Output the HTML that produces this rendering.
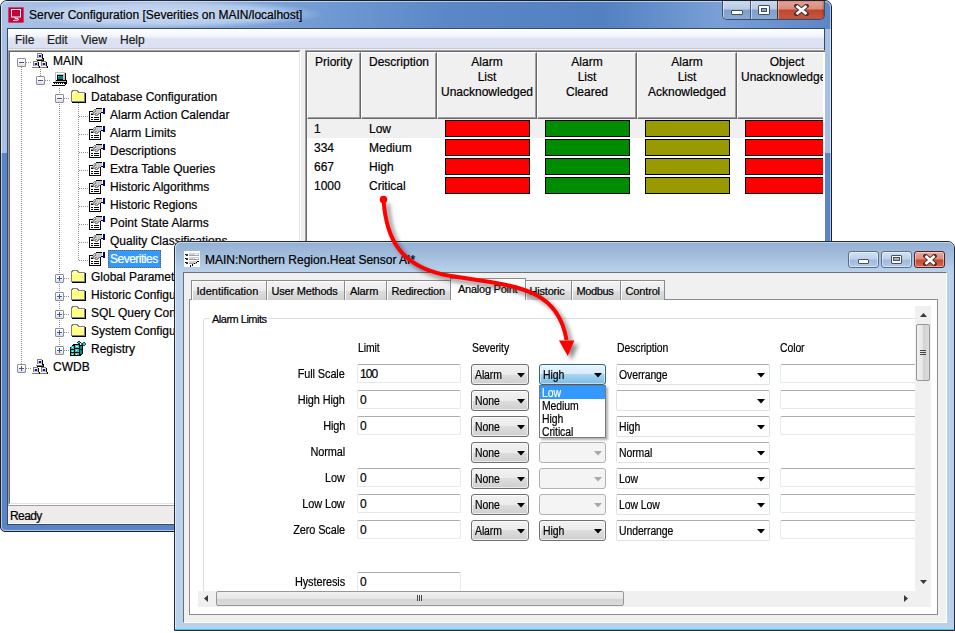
<!DOCTYPE html><html><head><meta charset="utf-8"><style>
html,body{margin:0;padding:0;background:#fff;}
body{width:955px;height:633px;position:relative;overflow:hidden;font-family:"Liberation Sans",sans-serif;}
.t{position:absolute;white-space:pre;font-family:"Liberation Sans",sans-serif;-webkit-text-stroke:0.2px currentColor;}
.b{position:absolute;box-sizing:border-box;}
svg{position:absolute;}
</style></head><body>

<div class="b" style="left:0px;top:0px;width:832px;height:532px;border:1px solid #1a1f2b;border-radius:7px 7px 5px 5px;background:linear-gradient(180deg,#a6bfe3 0px,#a6bfe3 152px,#5a85c5 152px,#5a85c5 100%);"></div>
<div class="b" style="left:1px;top:1px;width:830px;height:28px;border-radius:6px 6px 0 0;background:linear-gradient(90deg,#a9c2e5 0px,#9cb7e0 120px,#6f99d3 330px,#5b87c7 450px,#5280c2 600px,#7aa0d6 720px,#5a86c6 832px);"></div>
<div class="b" style="left:1px;top:1px;width:830px;height:530px;border:1px solid rgba(255,255,255,0.55);border-radius:6px 6px 4px 4px;"></div>
<div class="b" style="left:14px;top:0px;width:310px;height:28px;background:radial-gradient(closest-side,rgba(225,236,250,0.7) 0%,rgba(215,228,247,0.55) 70%,rgba(215,228,247,0) 100%);"></div>
<div class="b" style="left:7px;top:28px;width:818px;height:497px;background:#f0f0f0;border:1px solid #34496b;"></div>
<div class="b" style="left:8px;top:29px;width:816px;height:20px;background:linear-gradient(180deg,#ffffff 0%,#f3f5fb 35%,#dde3f2 50%,#dbe1f1 100%);"></div>
<div class="b" style="left:8px;top:48px;width:816px;height:1px;background:#c5cbd9;"></div>
<div class="t" style="left:15px;top:34px;font-size:12px;line-height:12px;color:#1e1e1e;">File</div>
<div class="t" style="left:47px;top:34px;font-size:12px;line-height:12px;color:#1e1e1e;">Edit</div>
<div class="t" style="left:81px;top:34px;font-size:12px;line-height:12px;color:#1e1e1e;">View</div>
<div class="t" style="left:120px;top:34px;font-size:12px;line-height:12px;color:#1e1e1e;">Help</div>
<div class="t" style="left:29px;top:9px;font-size:12px;line-height:12px;color:#000;">Server Configuration [Severities on MAIN/localhost]</div>
<svg style="left:8px;top:7px" width="16" height="16" viewBox="0 0 16 16">
<rect x="0" y="0" width="16" height="16" fill="#c4003d" stroke="#e9a0b5" stroke-width="0.8"/>
<rect x="3.5" y="2.5" width="9" height="7.5" fill="none" stroke="#fff" stroke-width="1"/>
<path d="M7 10 L7 11.5 L10 11.5 L10.5 13 L5 13.5" fill="none" stroke="#fff" stroke-width="1"/>
</svg>
<div class="b" style="left:722px;top:1px;width:103px;height:19px;border:1px solid #3b4d6b;border-top:none;border-radius:0 0 5px 5px;overflow:hidden;">
 <div class="b" style="left:0;top:0;width:28px;height:18px;background:linear-gradient(180deg,#cbd9ee 0%,#b8cbe6 45%,#7f9fcc 50%,#8aa8d3 100%);border-right:1px solid #44577a;box-shadow:inset 1px 0 0 rgba(255,255,255,0.5);"></div>
 <div class="b" style="left:28px;top:0;width:27px;height:18px;background:linear-gradient(180deg,#cbd9ee 0%,#b8cbe6 45%,#7f9fcc 50%,#8aa8d3 100%);border-right:1px solid #5e2a22;box-shadow:inset 1px 0 0 rgba(255,255,255,0.5);"></div>
 <div class="b" style="left:55px;top:0;width:47px;height:18px;background:linear-gradient(180deg,#e4a497 0%,#d78b7c 45%,#c0442d 50%,#c65a42 100%);box-shadow:inset 1px 0 0 rgba(255,255,255,0.35),inset -2px 0 2px rgba(90,20,10,0.35);"></div>
</div>
<div class="b" style="left:731px;top:10px;width:12px;height:5px;background:#fff;border:1px solid #434e62;border-radius:1px;"></div>
<div class="b" style="left:758px;top:5px;width:12px;height:10px;background:#fff;border:1px solid #434e62;border-radius:1px;"><div class="b" style="left:2px;top:2px;width:6px;height:4px;background:#8aa8d4;border:1px solid #434e62;"></div></div>
<svg style="left:794px;top:4px" width="15" height="12" viewBox="0 0 15 12"><path d="M2.5 2 L12.5 10 M12.5 2 L2.5 10" stroke="#4a3030" stroke-width="4.6" stroke-linecap="square"/><path d="M2.5 2 L12.5 10 M12.5 2 L2.5 10" stroke="#fff" stroke-width="2.8" stroke-linecap="butt"/></svg>

<div class="b" style="left:8px;top:50px;width:293px;height:455px;background:#fff;border-top:1px solid #a0a0a0;border-left:1px solid #a0a0a0;border-right:1px solid #fff;border-bottom:1px solid #fff;"></div>
<div class="b" style="left:9px;top:51px;width:291px;height:453px;border-top:1px solid #696969;border-left:1px solid #696969;border-right:1px solid #e3e3e3;border-bottom:1px solid #e3e3e3;"></div>
<div class="b" style="left:305px;top:50px;width:520px;height:455px;background:#fff;border-top:1px solid #a0a0a0;border-left:1px solid #a0a0a0;"></div>
<div class="b" style="left:306px;top:51px;width:519px;height:454px;border-top:1px solid #696969;border-left:1px solid #696969;"></div>
<div class="b" style="left:8px;top:505px;width:816px;height:19px;background:#efebea;border-top:1px solid #a0a0a0;border-bottom:1px solid #fff;"></div>
<div class="t" style="left:10px;top:510px;font-size:12px;line-height:12px;color:#000;letter-spacing:-0.6px;">Ready</div>
<div class="b" style="left:21px;top:67px;width:1px;height:300px;background:repeating-linear-gradient(180deg,#8e8e8e 0px,#8e8e8e 1px,transparent 1px,transparent 2px);"></div>
<div class="b" style="left:40px;top:69px;width:1px;height:7px;background:repeating-linear-gradient(180deg,#8e8e8e 0px,#8e8e8e 1px,transparent 1px,transparent 2px);"></div>
<div class="b" style="left:59px;top:88px;width:1px;height:258px;background:repeating-linear-gradient(180deg,#8e8e8e 0px,#8e8e8e 1px,transparent 1px,transparent 2px);"></div>
<div class="b" style="left:78px;top:103px;width:1px;height:157px;background:repeating-linear-gradient(180deg,#8e8e8e 0px,#8e8e8e 1px,transparent 1px,transparent 2px);"></div>
<div class="b" style="left:26px;top:62px;width:6px;height:1px;background:repeating-linear-gradient(90deg,#8e8e8e 0px,#8e8e8e 1px,transparent 1px,transparent 2px);"></div>
<div class="b" style="left:17px;top:58px;width:9px;height:9px;border:1px solid #8f8f8f;border-radius:1px;background:linear-gradient(180deg,#fff 0%,#f4f4f4 50%,#dcdcdc 100%);"></div>
<div class="b" style="left:19px;top:62px;width:5px;height:1px;background:#3c5aa8;"></div>
<svg style="left:32px;top:53px" width="16" height="16" viewBox="0 0 16 16" shape-rendering="crispEdges"><g fill="#c0c0c0"><rect x="5" y="0" width="5" height="5"/><rect x="4" y="5" width="7" height="2"/><rect x="1" y="8" width="5" height="5"/><rect x="0" y="13" width="7" height="2"/><rect x="9" y="8" width="5" height="5"/><rect x="8" y="13" width="7" height="2"/></g>
<g fill="#808080"><rect x="5" y="0" width="5" height="1"/><rect x="5" y="0" width="1" height="5"/><rect x="1" y="8" width="5" height="1"/><rect x="1" y="8" width="1" height="5"/><rect x="9" y="8" width="5" height="1"/><rect x="9" y="8" width="1" height="5"/><rect x="4" y="6" width="7" height="1"/><rect x="0" y="14" width="7" height="1"/><rect x="8" y="14" width="7" height="1"/></g>
<g fill="#ffffe0"><rect x="6" y="1" width="3" height="1"/><rect x="2" y="9" width="3" height="1"/><rect x="10" y="9" width="3" height="1"/><rect x="4" y="5" width="6" height="1"/><rect x="0" y="13" width="6" height="1"/><rect x="8" y="13" width="6" height="1"/></g>
<g fill="#0000ff"><rect x="7" y="2" width="2" height="2"/><rect x="3" y="10" width="2" height="2"/><rect x="11" y="10" width="2" height="2"/></g>
<g fill="#000"><rect x="10" y="1" width="1" height="5"/><rect x="11" y="5" width="1" height="3"/><rect x="5" y="7" width="7" height="1"/><rect x="6" y="9" width="1" height="4"/><rect x="7" y="13" width="1" height="2"/><rect x="14" y="9" width="1" height="4"/><rect x="15" y="13" width="1" height="2"/></g></svg>
<div class="t" style="left:53px;top:55px;font-size:12px;line-height:12px;color:#000;">MAIN</div>
<div class="b" style="left:45px;top:80px;width:6px;height:1px;background:repeating-linear-gradient(90deg,#8e8e8e 0px,#8e8e8e 1px,transparent 1px,transparent 2px);"></div>
<div class="b" style="left:36px;top:76px;width:9px;height:9px;border:1px solid #8f8f8f;border-radius:1px;background:linear-gradient(180deg,#fff 0%,#f4f4f4 50%,#dcdcdc 100%);"></div>
<div class="b" style="left:38px;top:80px;width:5px;height:1px;background:#3c5aa8;"></div>
<svg style="left:52px;top:71px" width="16" height="16" viewBox="0 0 16 16" shape-rendering="crispEdges"><rect x="3" y="1" width="10" height="9" fill="#c0c0c0"/><rect x="4" y="2" width="8" height="1" fill="#fff"/><rect x="4" y="2" width="1" height="7" fill="#fff"/><rect x="5" y="4" width="6" height="5" fill="#000"/><rect x="6" y="5" width="5" height="3" fill="#008080"/><rect x="6" y="5" width="1" height="1" fill="#00ffff"/><rect x="13" y="2" width="1" height="8" fill="#000"/><rect x="4" y="9" width="9" height="1" fill="#000"/>
<rect x="3" y="10" width="11" height="1" fill="#c0c0c0"/><rect x="14" y="9" width="1" height="4" fill="#000"/><rect x="1" y="11" width="13" height="1" fill="#000"/><rect x="2" y="12" width="1" height="1" fill="#000"/><rect x="4" y="12" width="1" height="1" fill="#000"/><rect x="6" y="12" width="1" height="1" fill="#000"/><rect x="8" y="12" width="1" height="1" fill="#000"/><rect x="10" y="12" width="1" height="1" fill="#000"/><rect x="12" y="12" width="1" height="1" fill="#000"/><rect x="0" y="13" width="13" height="1" fill="#fff"/><rect x="0" y="14" width="13" height="1" fill="#000"/><rect x="13" y="12" width="1" height="2" fill="#000"/></svg>
<div class="t" style="left:72px;top:73px;font-size:12px;line-height:12px;color:#000;">localhost</div>
<div class="b" style="left:64px;top:98px;width:6px;height:1px;background:repeating-linear-gradient(90deg,#8e8e8e 0px,#8e8e8e 1px,transparent 1px,transparent 2px);"></div>
<div class="b" style="left:55px;top:94px;width:9px;height:9px;border:1px solid #8f8f8f;border-radius:1px;background:linear-gradient(180deg,#fff 0%,#f4f4f4 50%,#dcdcdc 100%);"></div>
<div class="b" style="left:57px;top:98px;width:5px;height:1px;background:#3c5aa8;"></div>
<svg style="left:71px;top:90px" width="16" height="14" viewBox="0 0 16 14" shape-rendering="crispEdges"><path d="M0.5 2.5 L1.5 0.5 L6.5 0.5 L7.5 2.5 L13.5 2.5 L13.5 11.5 L0.5 11.5 Z" fill="#ffff80" stroke="#808080"/><rect x="1" y="12" width="14" height="1" fill="#000"/><rect x="14" y="3" width="1" height="10" fill="#000"/><rect x="1" y="3" width="12" height="1" fill="#fff" opacity="0.6"/></svg>
<div class="t" style="left:91px;top:91px;font-size:12px;line-height:12px;color:#000;">Database Configuration</div>
<div class="b" style="left:79px;top:116px;width:10px;height:1px;background:repeating-linear-gradient(90deg,#8e8e8e 0px,#8e8e8e 1px,transparent 1px,transparent 2px);"></div>
<svg style="left:89px;top:108px" width="16" height="15" viewBox="0 0 16 15" shape-rendering="crispEdges"><rect x="0.5" y="3.5" width="11" height="10" fill="#fff" stroke="#000"/><rect x="2" y="9" width="2" height="1" fill="#000"/><rect x="5" y="9" width="5" height="1" fill="#000"/><rect x="2" y="11" width="2" height="1" fill="#000"/><rect x="5" y="11" width="5" height="1" fill="#000"/><rect x="2" y="5" width="2" height="2" fill="#000"/>
<path d="M6 0.5 L2 5.5 L8.5 8.5 L11 5 Z" fill="#8a8a8a"/><path d="M3 5 L6 2 M5 6 L8 3 M7 7 L10 4" stroke="#fff" stroke-width="0.7"/><rect x="7" y="0" width="6" height="5" fill="#c8c8c8"/><rect x="7" y="0" width="6" height="1" fill="#000"/><rect x="12" y="4" width="2" height="1" fill="#000"/><rect x="14" y="0" width="2" height="6" fill="#000080"/></svg>
<div class="t" style="left:110px;top:109px;font-size:12px;line-height:12px;color:#000;">Alarm Action Calendar</div>
<div class="b" style="left:79px;top:134px;width:10px;height:1px;background:repeating-linear-gradient(90deg,#8e8e8e 0px,#8e8e8e 1px,transparent 1px,transparent 2px);"></div>
<svg style="left:89px;top:126px" width="16" height="15" viewBox="0 0 16 15" shape-rendering="crispEdges"><rect x="0.5" y="3.5" width="11" height="10" fill="#fff" stroke="#000"/><rect x="2" y="9" width="2" height="1" fill="#000"/><rect x="5" y="9" width="5" height="1" fill="#000"/><rect x="2" y="11" width="2" height="1" fill="#000"/><rect x="5" y="11" width="5" height="1" fill="#000"/><rect x="2" y="5" width="2" height="2" fill="#000"/>
<path d="M6 0.5 L2 5.5 L8.5 8.5 L11 5 Z" fill="#8a8a8a"/><path d="M3 5 L6 2 M5 6 L8 3 M7 7 L10 4" stroke="#fff" stroke-width="0.7"/><rect x="7" y="0" width="6" height="5" fill="#c8c8c8"/><rect x="7" y="0" width="6" height="1" fill="#000"/><rect x="12" y="4" width="2" height="1" fill="#000"/><rect x="14" y="0" width="2" height="6" fill="#000080"/></svg>
<div class="t" style="left:110px;top:127px;font-size:12px;line-height:12px;color:#000;">Alarm Limits</div>
<div class="b" style="left:79px;top:152px;width:10px;height:1px;background:repeating-linear-gradient(90deg,#8e8e8e 0px,#8e8e8e 1px,transparent 1px,transparent 2px);"></div>
<svg style="left:89px;top:144px" width="16" height="15" viewBox="0 0 16 15" shape-rendering="crispEdges"><rect x="0.5" y="3.5" width="11" height="10" fill="#fff" stroke="#000"/><rect x="2" y="9" width="2" height="1" fill="#000"/><rect x="5" y="9" width="5" height="1" fill="#000"/><rect x="2" y="11" width="2" height="1" fill="#000"/><rect x="5" y="11" width="5" height="1" fill="#000"/><rect x="2" y="5" width="2" height="2" fill="#000"/>
<path d="M6 0.5 L2 5.5 L8.5 8.5 L11 5 Z" fill="#8a8a8a"/><path d="M3 5 L6 2 M5 6 L8 3 M7 7 L10 4" stroke="#fff" stroke-width="0.7"/><rect x="7" y="0" width="6" height="5" fill="#c8c8c8"/><rect x="7" y="0" width="6" height="1" fill="#000"/><rect x="12" y="4" width="2" height="1" fill="#000"/><rect x="14" y="0" width="2" height="6" fill="#000080"/></svg>
<div class="t" style="left:110px;top:145px;font-size:12px;line-height:12px;color:#000;">Descriptions</div>
<div class="b" style="left:79px;top:170px;width:10px;height:1px;background:repeating-linear-gradient(90deg,#8e8e8e 0px,#8e8e8e 1px,transparent 1px,transparent 2px);"></div>
<svg style="left:89px;top:162px" width="16" height="15" viewBox="0 0 16 15" shape-rendering="crispEdges"><rect x="0.5" y="3.5" width="11" height="10" fill="#fff" stroke="#000"/><rect x="2" y="9" width="2" height="1" fill="#000"/><rect x="5" y="9" width="5" height="1" fill="#000"/><rect x="2" y="11" width="2" height="1" fill="#000"/><rect x="5" y="11" width="5" height="1" fill="#000"/><rect x="2" y="5" width="2" height="2" fill="#000"/>
<path d="M6 0.5 L2 5.5 L8.5 8.5 L11 5 Z" fill="#8a8a8a"/><path d="M3 5 L6 2 M5 6 L8 3 M7 7 L10 4" stroke="#fff" stroke-width="0.7"/><rect x="7" y="0" width="6" height="5" fill="#c8c8c8"/><rect x="7" y="0" width="6" height="1" fill="#000"/><rect x="12" y="4" width="2" height="1" fill="#000"/><rect x="14" y="0" width="2" height="6" fill="#000080"/></svg>
<div class="t" style="left:110px;top:163px;font-size:12px;line-height:12px;color:#000;">Extra Table Queries</div>
<div class="b" style="left:79px;top:188px;width:10px;height:1px;background:repeating-linear-gradient(90deg,#8e8e8e 0px,#8e8e8e 1px,transparent 1px,transparent 2px);"></div>
<svg style="left:89px;top:180px" width="16" height="15" viewBox="0 0 16 15" shape-rendering="crispEdges"><rect x="0.5" y="3.5" width="11" height="10" fill="#fff" stroke="#000"/><rect x="2" y="9" width="2" height="1" fill="#000"/><rect x="5" y="9" width="5" height="1" fill="#000"/><rect x="2" y="11" width="2" height="1" fill="#000"/><rect x="5" y="11" width="5" height="1" fill="#000"/><rect x="2" y="5" width="2" height="2" fill="#000"/>
<path d="M6 0.5 L2 5.5 L8.5 8.5 L11 5 Z" fill="#8a8a8a"/><path d="M3 5 L6 2 M5 6 L8 3 M7 7 L10 4" stroke="#fff" stroke-width="0.7"/><rect x="7" y="0" width="6" height="5" fill="#c8c8c8"/><rect x="7" y="0" width="6" height="1" fill="#000"/><rect x="12" y="4" width="2" height="1" fill="#000"/><rect x="14" y="0" width="2" height="6" fill="#000080"/></svg>
<div class="t" style="left:110px;top:181px;font-size:12px;line-height:12px;color:#000;">Historic Algorithms</div>
<div class="b" style="left:79px;top:206px;width:10px;height:1px;background:repeating-linear-gradient(90deg,#8e8e8e 0px,#8e8e8e 1px,transparent 1px,transparent 2px);"></div>
<svg style="left:89px;top:198px" width="16" height="15" viewBox="0 0 16 15" shape-rendering="crispEdges"><rect x="0.5" y="3.5" width="11" height="10" fill="#fff" stroke="#000"/><rect x="2" y="9" width="2" height="1" fill="#000"/><rect x="5" y="9" width="5" height="1" fill="#000"/><rect x="2" y="11" width="2" height="1" fill="#000"/><rect x="5" y="11" width="5" height="1" fill="#000"/><rect x="2" y="5" width="2" height="2" fill="#000"/>
<path d="M6 0.5 L2 5.5 L8.5 8.5 L11 5 Z" fill="#8a8a8a"/><path d="M3 5 L6 2 M5 6 L8 3 M7 7 L10 4" stroke="#fff" stroke-width="0.7"/><rect x="7" y="0" width="6" height="5" fill="#c8c8c8"/><rect x="7" y="0" width="6" height="1" fill="#000"/><rect x="12" y="4" width="2" height="1" fill="#000"/><rect x="14" y="0" width="2" height="6" fill="#000080"/></svg>
<div class="t" style="left:110px;top:199px;font-size:12px;line-height:12px;color:#000;">Historic Regions</div>
<div class="b" style="left:79px;top:224px;width:10px;height:1px;background:repeating-linear-gradient(90deg,#8e8e8e 0px,#8e8e8e 1px,transparent 1px,transparent 2px);"></div>
<svg style="left:89px;top:216px" width="16" height="15" viewBox="0 0 16 15" shape-rendering="crispEdges"><rect x="0.5" y="3.5" width="11" height="10" fill="#fff" stroke="#000"/><rect x="2" y="9" width="2" height="1" fill="#000"/><rect x="5" y="9" width="5" height="1" fill="#000"/><rect x="2" y="11" width="2" height="1" fill="#000"/><rect x="5" y="11" width="5" height="1" fill="#000"/><rect x="2" y="5" width="2" height="2" fill="#000"/>
<path d="M6 0.5 L2 5.5 L8.5 8.5 L11 5 Z" fill="#8a8a8a"/><path d="M3 5 L6 2 M5 6 L8 3 M7 7 L10 4" stroke="#fff" stroke-width="0.7"/><rect x="7" y="0" width="6" height="5" fill="#c8c8c8"/><rect x="7" y="0" width="6" height="1" fill="#000"/><rect x="12" y="4" width="2" height="1" fill="#000"/><rect x="14" y="0" width="2" height="6" fill="#000080"/></svg>
<div class="t" style="left:110px;top:217px;font-size:12px;line-height:12px;color:#000;">Point State Alarms</div>
<div class="b" style="left:79px;top:242px;width:10px;height:1px;background:repeating-linear-gradient(90deg,#8e8e8e 0px,#8e8e8e 1px,transparent 1px,transparent 2px);"></div>
<svg style="left:89px;top:234px" width="16" height="15" viewBox="0 0 16 15" shape-rendering="crispEdges"><rect x="0.5" y="3.5" width="11" height="10" fill="#fff" stroke="#000"/><rect x="2" y="9" width="2" height="1" fill="#000"/><rect x="5" y="9" width="5" height="1" fill="#000"/><rect x="2" y="11" width="2" height="1" fill="#000"/><rect x="5" y="11" width="5" height="1" fill="#000"/><rect x="2" y="5" width="2" height="2" fill="#000"/>
<path d="M6 0.5 L2 5.5 L8.5 8.5 L11 5 Z" fill="#8a8a8a"/><path d="M3 5 L6 2 M5 6 L8 3 M7 7 L10 4" stroke="#fff" stroke-width="0.7"/><rect x="7" y="0" width="6" height="5" fill="#c8c8c8"/><rect x="7" y="0" width="6" height="1" fill="#000"/><rect x="12" y="4" width="2" height="1" fill="#000"/><rect x="14" y="0" width="2" height="6" fill="#000080"/></svg>
<div class="t" style="left:110px;top:235px;font-size:12px;line-height:12px;color:#000;">Quality Classifications</div>
<div class="b" style="left:79px;top:260px;width:10px;height:1px;background:repeating-linear-gradient(90deg,#8e8e8e 0px,#8e8e8e 1px,transparent 1px,transparent 2px);"></div>
<svg style="left:89px;top:252px" width="16" height="15" viewBox="0 0 16 15" shape-rendering="crispEdges"><rect x="0.5" y="3.5" width="11" height="10" fill="#fff" stroke="#000"/><rect x="2" y="9" width="2" height="1" fill="#000"/><rect x="5" y="9" width="5" height="1" fill="#000"/><rect x="2" y="11" width="2" height="1" fill="#000"/><rect x="5" y="11" width="5" height="1" fill="#000"/><rect x="2" y="5" width="2" height="2" fill="#000"/>
<path d="M6 0.5 L2 5.5 L8.5 8.5 L11 5 Z" fill="#8a8a8a"/><path d="M3 5 L6 2 M5 6 L8 3 M7 7 L10 4" stroke="#fff" stroke-width="0.7"/><rect x="7" y="0" width="6" height="5" fill="#c8c8c8"/><rect x="7" y="0" width="6" height="1" fill="#000"/><rect x="12" y="4" width="2" height="1" fill="#000"/><rect x="14" y="0" width="2" height="6" fill="#000080"/></svg>
<div class="b" style="left:108px;top:250px;width:53px;height:18px;background:#3399ff;outline:1px dotted #7a5a2a;outline-offset:-1px;"></div>
<div class="t" style="left:110px;top:253px;font-size:12px;line-height:12px;color:#fff;letter-spacing:-0.5px;">Severities</div>
<div class="b" style="left:64px;top:278px;width:6px;height:1px;background:repeating-linear-gradient(90deg,#8e8e8e 0px,#8e8e8e 1px,transparent 1px,transparent 2px);"></div>
<div class="b" style="left:55px;top:274px;width:9px;height:9px;border:1px solid #8f8f8f;border-radius:1px;background:linear-gradient(180deg,#fff 0%,#f4f4f4 50%,#dcdcdc 100%);"></div>
<div class="b" style="left:57px;top:278px;width:5px;height:1px;background:#3c5aa8;"></div>
<div class="b" style="left:59px;top:276px;width:1px;height:5px;background:#3c5aa8;"></div>
<svg style="left:71px;top:270px" width="16" height="14" viewBox="0 0 16 14" shape-rendering="crispEdges"><path d="M0.5 2.5 L1.5 0.5 L6.5 0.5 L7.5 2.5 L13.5 2.5 L13.5 11.5 L0.5 11.5 Z" fill="#ffff80" stroke="#808080"/><rect x="1" y="12" width="14" height="1" fill="#000"/><rect x="14" y="3" width="1" height="10" fill="#000"/><rect x="1" y="3" width="12" height="1" fill="#fff" opacity="0.6"/></svg>
<div class="t" style="left:91px;top:271px;font-size:12px;line-height:12px;color:#000;">Global Parameters</div>
<div class="b" style="left:64px;top:296px;width:6px;height:1px;background:repeating-linear-gradient(90deg,#8e8e8e 0px,#8e8e8e 1px,transparent 1px,transparent 2px);"></div>
<div class="b" style="left:55px;top:292px;width:9px;height:9px;border:1px solid #8f8f8f;border-radius:1px;background:linear-gradient(180deg,#fff 0%,#f4f4f4 50%,#dcdcdc 100%);"></div>
<div class="b" style="left:57px;top:296px;width:5px;height:1px;background:#3c5aa8;"></div>
<div class="b" style="left:59px;top:294px;width:1px;height:5px;background:#3c5aa8;"></div>
<svg style="left:71px;top:288px" width="16" height="14" viewBox="0 0 16 14" shape-rendering="crispEdges"><path d="M0.5 2.5 L1.5 0.5 L6.5 0.5 L7.5 2.5 L13.5 2.5 L13.5 11.5 L0.5 11.5 Z" fill="#ffff80" stroke="#808080"/><rect x="1" y="12" width="14" height="1" fill="#000"/><rect x="14" y="3" width="1" height="10" fill="#000"/><rect x="1" y="3" width="12" height="1" fill="#fff" opacity="0.6"/></svg>
<div class="t" style="left:91px;top:289px;font-size:12px;line-height:12px;color:#000;">Historic Configuration</div>
<div class="b" style="left:64px;top:314px;width:6px;height:1px;background:repeating-linear-gradient(90deg,#8e8e8e 0px,#8e8e8e 1px,transparent 1px,transparent 2px);"></div>
<div class="b" style="left:55px;top:310px;width:9px;height:9px;border:1px solid #8f8f8f;border-radius:1px;background:linear-gradient(180deg,#fff 0%,#f4f4f4 50%,#dcdcdc 100%);"></div>
<div class="b" style="left:57px;top:314px;width:5px;height:1px;background:#3c5aa8;"></div>
<div class="b" style="left:59px;top:312px;width:1px;height:5px;background:#3c5aa8;"></div>
<svg style="left:71px;top:306px" width="16" height="14" viewBox="0 0 16 14" shape-rendering="crispEdges"><path d="M0.5 2.5 L1.5 0.5 L6.5 0.5 L7.5 2.5 L13.5 2.5 L13.5 11.5 L0.5 11.5 Z" fill="#ffff80" stroke="#808080"/><rect x="1" y="12" width="14" height="1" fill="#000"/><rect x="14" y="3" width="1" height="10" fill="#000"/><rect x="1" y="3" width="12" height="1" fill="#fff" opacity="0.6"/></svg>
<div class="t" style="left:91px;top:307px;font-size:12px;line-height:12px;color:#000;">SQL Query Configuration</div>
<div class="b" style="left:64px;top:332px;width:6px;height:1px;background:repeating-linear-gradient(90deg,#8e8e8e 0px,#8e8e8e 1px,transparent 1px,transparent 2px);"></div>
<div class="b" style="left:55px;top:328px;width:9px;height:9px;border:1px solid #8f8f8f;border-radius:1px;background:linear-gradient(180deg,#fff 0%,#f4f4f4 50%,#dcdcdc 100%);"></div>
<div class="b" style="left:57px;top:332px;width:5px;height:1px;background:#3c5aa8;"></div>
<div class="b" style="left:59px;top:330px;width:1px;height:5px;background:#3c5aa8;"></div>
<svg style="left:71px;top:324px" width="16" height="14" viewBox="0 0 16 14" shape-rendering="crispEdges"><path d="M0.5 2.5 L1.5 0.5 L6.5 0.5 L7.5 2.5 L13.5 2.5 L13.5 11.5 L0.5 11.5 Z" fill="#ffff80" stroke="#808080"/><rect x="1" y="12" width="14" height="1" fill="#000"/><rect x="14" y="3" width="1" height="10" fill="#000"/><rect x="1" y="3" width="12" height="1" fill="#fff" opacity="0.6"/></svg>
<div class="t" style="left:91px;top:325px;font-size:12px;line-height:12px;color:#000;">System Configuration</div>
<div class="b" style="left:64px;top:350px;width:6px;height:1px;background:repeating-linear-gradient(90deg,#8e8e8e 0px,#8e8e8e 1px,transparent 1px,transparent 2px);"></div>
<div class="b" style="left:55px;top:346px;width:9px;height:9px;border:1px solid #8f8f8f;border-radius:1px;background:linear-gradient(180deg,#fff 0%,#f4f4f4 50%,#dcdcdc 100%);"></div>
<div class="b" style="left:57px;top:350px;width:5px;height:1px;background:#3c5aa8;"></div>
<div class="b" style="left:59px;top:348px;width:1px;height:5px;background:#3c5aa8;"></div>
<svg style="left:70px;top:341px" width="16" height="16" viewBox="0 0 16 16" shape-rendering="crispEdges"><path d="M0 6 L3 3 L10 3 L10 4 L13 3 L13 13 L10 15 L0 15 Z" fill="#000"/>
<rect x="1" y="5" width="3" height="3" fill="#00d8d8"/><rect x="5" y="4" width="4" height="3" fill="#00d8d8"/><rect x="1" y="9" width="3" height="2" fill="#00d8d8"/><rect x="5" y="8" width="4" height="3" fill="#00d8d8"/><rect x="1" y="12" width="3" height="2" fill="#00d8d8"/><rect x="5" y="12" width="4" height="2" fill="#00d8d8"/><rect x="6" y="12" width="3" height="2" fill="#00d8d8"/>
<rect x="10" y="5" width="2" height="3" fill="#008c8c"/><rect x="10" y="9" width="2" height="4" fill="#008c8c"/>
<g fill="#fff"><rect x="2" y="6" width="1" height="1"/><rect x="6" y="5" width="2" height="1"/><rect x="2" y="10" width="1" height="1"/><rect x="6" y="9" width="1" height="1"/><rect x="2" y="13" width="1" height="1"/><rect x="6" y="13" width="1" height="1"/></g>
<path d="M7 1.5 L9 0 L11 1.5 L9 3 Z" fill="#00e0e0" stroke="#000" stroke-width="0.7"/><path d="M11 3 L13.5 1.5 L16 3 L13.5 4.5 Z" fill="#00e0e0" stroke="#000" stroke-width="0.7"/></svg>
<div class="t" style="left:91px;top:343px;font-size:12px;line-height:12px;color:#000;">Registry</div>
<div class="b" style="left:26px;top:368px;width:6px;height:1px;background:repeating-linear-gradient(90deg,#8e8e8e 0px,#8e8e8e 1px,transparent 1px,transparent 2px);"></div>
<div class="b" style="left:17px;top:364px;width:9px;height:9px;border:1px solid #8f8f8f;border-radius:1px;background:linear-gradient(180deg,#fff 0%,#f4f4f4 50%,#dcdcdc 100%);"></div>
<div class="b" style="left:19px;top:368px;width:5px;height:1px;background:#3c5aa8;"></div>
<div class="b" style="left:21px;top:366px;width:1px;height:5px;background:#3c5aa8;"></div>
<svg style="left:32px;top:359px" width="16" height="16" viewBox="0 0 16 16" shape-rendering="crispEdges"><g fill="#c0c0c0"><rect x="5" y="0" width="5" height="5"/><rect x="4" y="5" width="7" height="2"/><rect x="1" y="8" width="5" height="5"/><rect x="0" y="13" width="7" height="2"/><rect x="9" y="8" width="5" height="5"/><rect x="8" y="13" width="7" height="2"/></g>
<g fill="#808080"><rect x="5" y="0" width="5" height="1"/><rect x="5" y="0" width="1" height="5"/><rect x="1" y="8" width="5" height="1"/><rect x="1" y="8" width="1" height="5"/><rect x="9" y="8" width="5" height="1"/><rect x="9" y="8" width="1" height="5"/><rect x="4" y="6" width="7" height="1"/><rect x="0" y="14" width="7" height="1"/><rect x="8" y="14" width="7" height="1"/></g>
<g fill="#ffffe0"><rect x="6" y="1" width="3" height="1"/><rect x="2" y="9" width="3" height="1"/><rect x="10" y="9" width="3" height="1"/><rect x="4" y="5" width="6" height="1"/><rect x="0" y="13" width="6" height="1"/><rect x="8" y="13" width="6" height="1"/></g>
<g fill="#0000ff"><rect x="7" y="2" width="2" height="2"/><rect x="3" y="10" width="2" height="2"/><rect x="11" y="10" width="2" height="2"/></g>
<g fill="#000"><rect x="10" y="1" width="1" height="5"/><rect x="11" y="5" width="1" height="3"/><rect x="5" y="7" width="7" height="1"/><rect x="6" y="9" width="1" height="4"/><rect x="7" y="13" width="1" height="2"/><rect x="14" y="9" width="1" height="4"/><rect x="15" y="13" width="1" height="2"/></g></svg>
<div class="t" style="left:53px;top:361px;font-size:12px;line-height:12px;color:#000;">CWDB</div>
<div class="b" style="left:307px;top:52px;width:516px;height:452px;overflow:hidden;">
<div class="b" style="left:0px;top:0px;width:54px;height:67px;background:#f0f0f0;border-left:1px solid #fff;border-top:1px solid #fff;border-right:1px solid #696969;border-bottom:1px solid #696969;box-shadow:inset -1px -1px 0 #a0a0a0;"></div>
<div class="b" style="left:54px;top:0px;width:76px;height:67px;background:#f0f0f0;border-left:1px solid #fff;border-top:1px solid #fff;border-right:1px solid #696969;border-bottom:1px solid #696969;box-shadow:inset -1px -1px 0 #a0a0a0;"></div>
<div class="b" style="left:130px;top:0px;width:100px;height:67px;background:#f0f0f0;border-left:1px solid #fff;border-top:1px solid #fff;border-right:1px solid #696969;border-bottom:1px solid #696969;box-shadow:inset -1px -1px 0 #a0a0a0;"></div>
<div class="b" style="left:230px;top:0px;width:100px;height:67px;background:#f0f0f0;border-left:1px solid #fff;border-top:1px solid #fff;border-right:1px solid #696969;border-bottom:1px solid #696969;box-shadow:inset -1px -1px 0 #a0a0a0;"></div>
<div class="b" style="left:330px;top:0px;width:100px;height:67px;background:#f0f0f0;border-left:1px solid #fff;border-top:1px solid #fff;border-right:1px solid #696969;border-bottom:1px solid #696969;box-shadow:inset -1px -1px 0 #a0a0a0;"></div>
<div class="b" style="left:430px;top:0px;width:100px;height:67px;background:#f0f0f0;border-left:1px solid #fff;border-top:1px solid #fff;border-right:1px solid #696969;border-bottom:1px solid #696969;box-shadow:inset -1px -1px 0 #a0a0a0;"></div>
<div class="b" style="left:0px;top:67px;width:516px;height:19px;background:#f0f0f0;"></div>
</div>
<div class="t" style="left:315px;top:56px;font-size:12px;line-height:12px;color:#000;">Priority</div>
<div class="t" style="left:369px;top:56px;font-size:12px;line-height:12px;color:#000;">Description</div>
<div class="t" style="left:427px;width:120px;text-align:center;top:56px;font-size:12px;line-height:12px;">Alarm</div>
<div class="t" style="left:427px;width:120px;text-align:center;top:71px;font-size:12px;line-height:12px;">List</div>
<div class="t" style="left:427px;width:120px;text-align:center;top:86px;font-size:12px;line-height:12px;">Unacknowledged</div>
<div class="t" style="left:527px;width:120px;text-align:center;top:56px;font-size:12px;line-height:12px;">Alarm</div>
<div class="t" style="left:527px;width:120px;text-align:center;top:71px;font-size:12px;line-height:12px;">List</div>
<div class="t" style="left:527px;width:120px;text-align:center;top:86px;font-size:12px;line-height:12px;">Cleared</div>
<div class="t" style="left:627px;width:120px;text-align:center;top:56px;font-size:12px;line-height:12px;">Alarm</div>
<div class="t" style="left:627px;width:120px;text-align:center;top:71px;font-size:12px;line-height:12px;">List</div>
<div class="t" style="left:627px;width:120px;text-align:center;top:86px;font-size:12px;line-height:12px;">Acknowledged</div>
<div class="b" style="left:737px;top:52px;width:86px;height:66px;overflow:hidden;">
<div class="t" style="left:-10px;width:120px;text-align:center;top:56px;font-size:12px;line-height:12px;top:4px;">Object</div>
<div class="t" style="left:-10px;width:120px;text-align:center;font-size:12px;line-height:12px;top:19px;">Unacknowledged</div>
</div>
<div class="t" style="left:314px;top:123px;font-size:12px;line-height:12px;color:#000;">1</div>
<div class="t" style="left:369px;top:123px;font-size:12px;line-height:12px;color:#000;">Low</div>
<div class="b" style="left:445px;top:120px;width:85px;height:17px;background:#ff0000;border:1px solid #000;"></div>
<div class="b" style="left:545px;top:120px;width:85px;height:17px;background:#008c00;border:1px solid #000;"></div>
<div class="b" style="left:645px;top:120px;width:85px;height:17px;background:#999900;border:1px solid #000;"></div>
<div class="b" style="left:745px;top:120px;width:78px;height:17px;background:#ff0000;border:1px solid #000;border-right:none;"></div>
<div class="t" style="left:314px;top:142px;font-size:12px;line-height:12px;color:#000;">334</div>
<div class="t" style="left:369px;top:142px;font-size:12px;line-height:12px;color:#000;">Medium</div>
<div class="b" style="left:445px;top:139px;width:85px;height:17px;background:#ff0000;border:1px solid #000;"></div>
<div class="b" style="left:545px;top:139px;width:85px;height:17px;background:#008c00;border:1px solid #000;"></div>
<div class="b" style="left:645px;top:139px;width:85px;height:17px;background:#999900;border:1px solid #000;"></div>
<div class="b" style="left:745px;top:139px;width:78px;height:17px;background:#ff0000;border:1px solid #000;border-right:none;"></div>
<div class="t" style="left:314px;top:161px;font-size:12px;line-height:12px;color:#000;">667</div>
<div class="t" style="left:369px;top:161px;font-size:12px;line-height:12px;color:#000;">High</div>
<div class="b" style="left:445px;top:158px;width:85px;height:17px;background:#ff0000;border:1px solid #000;"></div>
<div class="b" style="left:545px;top:158px;width:85px;height:17px;background:#008c00;border:1px solid #000;"></div>
<div class="b" style="left:645px;top:158px;width:85px;height:17px;background:#999900;border:1px solid #000;"></div>
<div class="b" style="left:745px;top:158px;width:78px;height:17px;background:#ff0000;border:1px solid #000;border-right:none;"></div>
<div class="t" style="left:314px;top:180px;font-size:12px;line-height:12px;color:#000;">1000</div>
<div class="t" style="left:369px;top:180px;font-size:12px;line-height:12px;color:#000;">Critical</div>
<div class="b" style="left:445px;top:177px;width:85px;height:17px;background:#ff0000;border:1px solid #000;"></div>
<div class="b" style="left:545px;top:177px;width:85px;height:17px;background:#008c00;border:1px solid #000;"></div>
<div class="b" style="left:645px;top:177px;width:85px;height:17px;background:#999900;border:1px solid #000;"></div>
<div class="b" style="left:745px;top:177px;width:78px;height:17px;background:#ff0000;border:1px solid #000;border-right:none;"></div>
<div class="b" style="left:174px;top:241px;width:781px;height:390px;border:1px solid #232a33;border-radius:7px 7px 0 0;background:#b9d1ea;overflow:hidden;"></div>
<div class="b" style="left:175px;top:242px;width:779px;height:30px;border-radius:6px 6px 0 0;background:linear-gradient(180deg,#93b0d3 0%,#a4bedd 50%,#bad2eb 100%);"></div>
<div class="b" style="left:175px;top:242px;width:779px;height:388px;border-left:1px solid rgba(255,255,255,0.5);border-top:1px solid rgba(255,255,255,0.45);border-radius:6px 6px 0 0;"></div>
<div class="b" style="left:175px;top:629px;width:779px;height:1px;background:#3fc3ea;"></div>
<div class="b" style="left:183px;top:272px;width:764px;height:351px;background:#f0f0f0;border-left:1px solid #6f6f6f;border-top:1px solid #6f6f6f;border-right:1px solid #fff;border-bottom:1px solid #fff;"></div>
<div class="t" style="left:205px;top:254px;font-size:12px;line-height:12px;color:#000;">MAIN:Northern Region.Heat Sensor AI*</div>
<svg style="left:184px;top:251px" width="16" height="16" viewBox="0 0 16 16" shape-rendering="crispEdges"><rect x="0" y="0" width="16" height="16" fill="#fff"/>
<rect x="5" y="2" width="10" height="3" fill="#d0d0d0"/><rect x="5" y="6" width="10" height="3" fill="#d0d0d0"/><rect x="5" y="10" width="8" height="3" fill="#d0d0d0"/>
<rect x="5" y="4" width="10" height="1" fill="#a0a0a0"/><rect x="5" y="8" width="10" height="1" fill="#a0a0a0"/><rect x="5" y="12" width="8" height="1" fill="#a0a0a0"/>
<rect x="1" y="3" width="1" height="1" fill="#000"/><rect x="2" y="3" width="2" height="2" fill="#333"/><rect x="1" y="7" width="1" height="1" fill="#000"/><rect x="2" y="7" width="2" height="2" fill="#333"/><rect x="1" y="11" width="1" height="1" fill="#000"/><rect x="2" y="11" width="2" height="2" fill="#333"/>
<path d="M6 15.5 L9 13.5 L12 12 L15 10" stroke="#000" stroke-width="1.3" stroke-dasharray="1.5 0.7"/><rect x="11" y="3" width="3" height="1" fill="#fff"/><rect x="11" y="7" width="3" height="1" fill="#fff"/></svg>
<div class="b" style="left:848px;top:251px;width:31px;height:17px;border:1px solid #59708f;border-radius:3px;background:linear-gradient(180deg,#d3e1f1 0%,#bfd2ea 45%,#9fbade 55%,#b4cbe8 100%);box-shadow:inset 0 0 0 1px rgba(255,255,255,0.45);"></div>
<div class="b" style="left:881px;top:251px;width:31px;height:17px;border:1px solid #59708f;border-radius:3px;background:linear-gradient(180deg,#d3e1f1 0%,#bfd2ea 45%,#9fbade 55%,#b4cbe8 100%);box-shadow:inset 0 0 0 1px rgba(255,255,255,0.45);"></div>
<div class="b" style="left:914px;top:251px;width:31px;height:17px;border:1px solid #5a1d1d;border-radius:3px;background:linear-gradient(180deg,#e9a99b 0%,#dc8c7b 45%,#c5482a 55%,#d66a50 100%);box-shadow:inset 0 0 0 1px rgba(255,255,255,0.45);"></div>
<div class="b" style="left:858px;top:259px;width:11px;height:5px;background:#fff;border:1px solid #46505e;border-radius:1px;"></div>
<div class="b" style="left:891px;top:255px;width:11px;height:9px;background:#fff;border:1px solid #46505e;border-radius:1px;"></div>
<div class="b" style="left:893px;top:257px;width:7px;height:4px;background:#9db8dc;border:1px solid #46505e;"></div>
<svg style="left:923px;top:254px" width="14" height="12" viewBox="0 0 14 12"><path d="M2.5 2 L11.5 10 M11.5 2 L2.5 10" stroke="#4a3030" stroke-width="4.4" stroke-linecap="square"/><path d="M2.5 2 L11.5 10 M11.5 2 L2.5 10" stroke="#fff" stroke-width="2.6"/></svg>
<div class="b" style="left:189px;top:299px;width:749px;height:316px;background:#fff;border:1px solid #898c95;"></div>
<div class="b" style="left:191px;top:280px;width:76px;height:20px;border:1px solid #898c95;border-bottom:none;background:linear-gradient(180deg,#f3f3f3 0%,#ebebeb 50%,#dedede 52%,#d0d0d0 100%);box-shadow:inset 1px 1px 0 #fff;"></div>
<div class="t" style="left:196.5px;top:286px;font-size:11px;line-height:11px;color:#000;letter-spacing:0px;">Identification</div>
<div class="b" style="left:266px;top:280px;width:79px;height:20px;border:1px solid #898c95;border-bottom:none;background:linear-gradient(180deg,#f3f3f3 0%,#ebebeb 50%,#dedede 52%,#d0d0d0 100%);box-shadow:inset 1px 1px 0 #fff;"></div>
<div class="t" style="left:271.5px;top:286px;font-size:11px;line-height:11px;color:#000;letter-spacing:-0.2px;">User Methods</div>
<div class="b" style="left:344px;top:280px;width:43px;height:20px;border:1px solid #898c95;border-bottom:none;background:linear-gradient(180deg,#f3f3f3 0%,#ebebeb 50%,#dedede 52%,#d0d0d0 100%);box-shadow:inset 1px 1px 0 #fff;"></div>
<div class="t" style="left:350px;top:286px;font-size:11px;line-height:11px;color:#000;letter-spacing:-0.1px;">Alarm</div>
<div class="b" style="left:386px;top:280px;width:65px;height:20px;border:1px solid #898c95;border-bottom:none;background:linear-gradient(180deg,#f3f3f3 0%,#ebebeb 50%,#dedede 52%,#d0d0d0 100%);box-shadow:inset 1px 1px 0 #fff;"></div>
<div class="t" style="left:391.5px;top:286px;font-size:11px;line-height:11px;color:#000;letter-spacing:-0.2px;">Redirection</div>
<div class="b" style="left:525px;top:280px;width:47px;height:20px;border:1px solid #898c95;border-bottom:none;background:linear-gradient(180deg,#f3f3f3 0%,#ebebeb 50%,#dedede 52%,#d0d0d0 100%);box-shadow:inset 1px 1px 0 #fff;"></div>
<div class="t" style="left:529.5px;top:286px;font-size:11px;line-height:11px;color:#000;letter-spacing:-0.2px;">Historic</div>
<div class="b" style="left:571px;top:280px;width:50px;height:20px;border:1px solid #898c95;border-bottom:none;background:linear-gradient(180deg,#f3f3f3 0%,#ebebeb 50%,#dedede 52%,#d0d0d0 100%);box-shadow:inset 1px 1px 0 #fff;"></div>
<div class="t" style="left:576.5px;top:286px;font-size:11px;line-height:11px;color:#000;letter-spacing:-0.4px;">Modbus</div>
<div class="b" style="left:620px;top:280px;width:45px;height:20px;border:1px solid #898c95;border-bottom:none;background:linear-gradient(180deg,#f3f3f3 0%,#ebebeb 50%,#dedede 52%,#d0d0d0 100%);box-shadow:inset 1px 1px 0 #fff;"></div>
<div class="t" style="left:625.5px;top:286px;font-size:11px;line-height:11px;color:#000;letter-spacing:-0.15px;">Control</div>
<div class="b" style="left:450px;top:278px;width:76px;height:22px;border:1px solid #898c95;border-bottom:none;background:#fff;"></div>
<div class="t" style="left:458px;top:284px;font-size:11px;line-height:11px;color:#000;letter-spacing:-0.25px;">Analog Point</div>
<div class="b" style="left:190px;top:300px;width:741px;height:291px;overflow:hidden;">
<div class="b" style="left:13px;top:18px;width:800px;height:400px;border:1px solid #d5dfe5;border-radius:3px;"></div>
<div class="b" style="left:19px;top:12px;width:59px;height:12px;background:#fff;"></div>
</div>
<div class="t" style="left:212px;top:314px;font-size:11px;line-height:11px;color:#000;letter-spacing:-0.5px;">Alarm Limits</div>
<div class="t" style="left:358px;top:342px;font-size:12px;line-height:12px;color:#000;transform:scaleX(0.87);transform-origin:left top;letter-spacing:-0.1px;">Limit</div>
<div class="t" style="left:472px;top:342px;font-size:12px;line-height:12px;color:#000;transform:scaleX(0.87);transform-origin:left top;letter-spacing:-0.1px;">Severity</div>
<div class="t" style="left:617px;top:342px;font-size:12px;line-height:12px;color:#000;transform:scaleX(0.87);transform-origin:left top;letter-spacing:-0.1px;">Description</div>
<div class="t" style="left:780px;top:342px;font-size:12px;line-height:12px;color:#000;transform:scaleX(0.87);transform-origin:left top;letter-spacing:-0.1px;">Color</div>
<div class="t" style="right:610px;top:368px;font-size:12px;line-height:12px;color:#000;transform:scaleX(0.91);transform-origin:right top;letter-spacing:-0.1px;">Full Scale</div>
<div class="b" style="left:357px;top:364px;width:104px;height:19px;background:#fff;border:1px solid #e3e9ef;border-top-color:#abadb3;border-radius:2px;"></div>
<div class="t" style="left:360px;top:368px;font-size:12px;line-height:12px;color:#000;letter-spacing:-0.9px;">100</div>
<div class="b" style="left:471px;top:364px;width:58px;height:21px;border:1px solid #707070;border-radius:3px;background:linear-gradient(180deg,#f2f2f2 0%,#ebebeb 50%,#dddddd 50%,#cfcfcf 100%);box-shadow:inset 0 0 0 1px rgba(255,255,255,0.6);"></div>
<div class="t" style="left:475px;top:369px;font-size:12px;line-height:12px;color:#000;transform:scaleX(0.87);transform-origin:left top;letter-spacing:-0.1px;">Alarm</div>
<svg style="left:517px;top:373px" width="8" height="5" viewBox="0 0 8 5"><path d="M0 0 L8 0 L4 4.5 Z" fill="#000"/></svg>
<div class="b" style="left:539px;top:364px;width:67px;height:21px;border:1px solid #2c628b;border-radius:3px;background:linear-gradient(180deg,#e8f4fc 0%,#d6ecf9 48%,#a6d5f2 50%,#7cbbe2 100%);box-shadow:inset 0 0 0 1px rgba(255,255,255,0.5);"></div>
<div class="t" style="left:543px;top:369px;font-size:12px;line-height:12px;color:#000;transform:scaleX(0.87);transform-origin:left top;letter-spacing:-0.1px;">High</div>
<svg style="left:594px;top:373px" width="8" height="5" viewBox="0 0 8 5"><path d="M0 0 L8 0 L4 4.5 Z" fill="#000"/></svg>
<div class="b" style="left:616px;top:364px;width:154px;height:21px;background:#fff;border:1px solid #dde3e8;border-top-color:#abadb3;border-radius:2px;"></div>
<div class="t" style="left:619px;top:369px;font-size:12px;line-height:12px;color:#000;transform:scaleX(0.87);transform-origin:left top;letter-spacing:-0.1px;">Overrange</div>
<svg style="left:757px;top:373px" width="8" height="5" viewBox="0 0 8 5"><path d="M0 0 L8 0 L4 4.5 Z" fill="#000"/></svg>
<div class="b" style="left:780px;top:364px;width:140px;height:19px;background:#fff;border:1px solid #e3e9ef;border-top-color:#abadb3;border-radius:2px;"></div>
<div class="t" style="right:610px;top:394px;font-size:12px;line-height:12px;color:#000;transform:scaleX(0.91);transform-origin:right top;letter-spacing:-0.1px;">High High</div>
<div class="b" style="left:357px;top:390px;width:104px;height:19px;background:#fff;border:1px solid #e3e9ef;border-top-color:#abadb3;border-radius:2px;"></div>
<div class="t" style="left:360px;top:394px;font-size:12px;line-height:12px;color:#000;letter-spacing:-0.9px;">0</div>
<div class="b" style="left:471px;top:390px;width:58px;height:21px;border:1px solid #707070;border-radius:3px;background:linear-gradient(180deg,#f2f2f2 0%,#ebebeb 50%,#dddddd 50%,#cfcfcf 100%);box-shadow:inset 0 0 0 1px rgba(255,255,255,0.6);"></div>
<div class="t" style="left:475px;top:395px;font-size:12px;line-height:12px;color:#000;transform:scaleX(0.87);transform-origin:left top;letter-spacing:-0.1px;">None</div>
<svg style="left:517px;top:399px" width="8" height="5" viewBox="0 0 8 5"><path d="M0 0 L8 0 L4 4.5 Z" fill="#000"/></svg>
<div class="b" style="left:616px;top:390px;width:154px;height:21px;background:#fff;border:1px solid #dde3e8;border-top-color:#abadb3;border-radius:2px;"></div>
<svg style="left:757px;top:399px" width="8" height="5" viewBox="0 0 8 5"><path d="M0 0 L8 0 L4 4.5 Z" fill="#000"/></svg>
<div class="b" style="left:780px;top:390px;width:140px;height:19px;background:#fff;border:1px solid #e3e9ef;border-top-color:#abadb3;border-radius:2px;"></div>
<div class="t" style="right:610px;top:420px;font-size:12px;line-height:12px;color:#000;transform:scaleX(0.91);transform-origin:right top;letter-spacing:-0.1px;">High</div>
<div class="b" style="left:357px;top:416px;width:104px;height:19px;background:#fff;border:1px solid #e3e9ef;border-top-color:#abadb3;border-radius:2px;"></div>
<div class="t" style="left:360px;top:420px;font-size:12px;line-height:12px;color:#000;letter-spacing:-0.9px;">0</div>
<div class="b" style="left:471px;top:416px;width:58px;height:21px;border:1px solid #707070;border-radius:3px;background:linear-gradient(180deg,#f2f2f2 0%,#ebebeb 50%,#dddddd 50%,#cfcfcf 100%);box-shadow:inset 0 0 0 1px rgba(255,255,255,0.6);"></div>
<div class="t" style="left:475px;top:421px;font-size:12px;line-height:12px;color:#000;transform:scaleX(0.87);transform-origin:left top;letter-spacing:-0.1px;">None</div>
<svg style="left:517px;top:425px" width="8" height="5" viewBox="0 0 8 5"><path d="M0 0 L8 0 L4 4.5 Z" fill="#000"/></svg>
<div class="b" style="left:616px;top:416px;width:154px;height:21px;background:#fff;border:1px solid #dde3e8;border-top-color:#abadb3;border-radius:2px;"></div>
<div class="t" style="left:619px;top:421px;font-size:12px;line-height:12px;color:#000;transform:scaleX(0.87);transform-origin:left top;letter-spacing:-0.1px;">High</div>
<svg style="left:757px;top:425px" width="8" height="5" viewBox="0 0 8 5"><path d="M0 0 L8 0 L4 4.5 Z" fill="#000"/></svg>
<div class="b" style="left:780px;top:416px;width:140px;height:19px;background:#fff;border:1px solid #e3e9ef;border-top-color:#abadb3;border-radius:2px;"></div>
<div class="t" style="right:610px;top:446px;font-size:12px;line-height:12px;color:#000;transform:scaleX(0.91);transform-origin:right top;letter-spacing:-0.1px;">Normal</div>
<div class="b" style="left:471px;top:442px;width:58px;height:21px;border:1px solid #707070;border-radius:3px;background:linear-gradient(180deg,#f2f2f2 0%,#ebebeb 50%,#dddddd 50%,#cfcfcf 100%);box-shadow:inset 0 0 0 1px rgba(255,255,255,0.6);"></div>
<div class="t" style="left:475px;top:447px;font-size:12px;line-height:12px;color:#000;transform:scaleX(0.87);transform-origin:left top;letter-spacing:-0.1px;">None</div>
<svg style="left:517px;top:451px" width="8" height="5" viewBox="0 0 8 5"><path d="M0 0 L8 0 L4 4.5 Z" fill="#000"/></svg>
<div class="b" style="left:539px;top:442px;width:67px;height:21px;border:1px solid #adb2b5;border-radius:3px;background:#f4f4f4;"></div>
<svg style="left:594px;top:451px" width="8" height="5" viewBox="0 0 8 5"><path d="M0 0 L8 0 L4 4.5 Z" fill="#a8a8a8"/></svg>
<div class="b" style="left:616px;top:442px;width:154px;height:21px;background:#fff;border:1px solid #dde3e8;border-top-color:#abadb3;border-radius:2px;"></div>
<div class="t" style="left:619px;top:447px;font-size:12px;line-height:12px;color:#000;transform:scaleX(0.87);transform-origin:left top;letter-spacing:-0.1px;">Normal</div>
<svg style="left:757px;top:451px" width="8" height="5" viewBox="0 0 8 5"><path d="M0 0 L8 0 L4 4.5 Z" fill="#000"/></svg>
<div class="t" style="right:610px;top:472px;font-size:12px;line-height:12px;color:#000;transform:scaleX(0.91);transform-origin:right top;letter-spacing:-0.1px;">Low</div>
<div class="b" style="left:357px;top:468px;width:104px;height:19px;background:#fff;border:1px solid #e3e9ef;border-top-color:#abadb3;border-radius:2px;"></div>
<div class="t" style="left:360px;top:472px;font-size:12px;line-height:12px;color:#000;letter-spacing:-0.9px;">0</div>
<div class="b" style="left:471px;top:468px;width:58px;height:21px;border:1px solid #707070;border-radius:3px;background:linear-gradient(180deg,#f2f2f2 0%,#ebebeb 50%,#dddddd 50%,#cfcfcf 100%);box-shadow:inset 0 0 0 1px rgba(255,255,255,0.6);"></div>
<div class="t" style="left:475px;top:473px;font-size:12px;line-height:12px;color:#000;transform:scaleX(0.87);transform-origin:left top;letter-spacing:-0.1px;">None</div>
<svg style="left:517px;top:477px" width="8" height="5" viewBox="0 0 8 5"><path d="M0 0 L8 0 L4 4.5 Z" fill="#000"/></svg>
<div class="b" style="left:539px;top:468px;width:67px;height:21px;border:1px solid #adb2b5;border-radius:3px;background:#f4f4f4;"></div>
<svg style="left:594px;top:477px" width="8" height="5" viewBox="0 0 8 5"><path d="M0 0 L8 0 L4 4.5 Z" fill="#a8a8a8"/></svg>
<div class="b" style="left:616px;top:468px;width:154px;height:21px;background:#fff;border:1px solid #dde3e8;border-top-color:#abadb3;border-radius:2px;"></div>
<div class="t" style="left:619px;top:473px;font-size:12px;line-height:12px;color:#000;transform:scaleX(0.87);transform-origin:left top;letter-spacing:-0.1px;">Low</div>
<svg style="left:757px;top:477px" width="8" height="5" viewBox="0 0 8 5"><path d="M0 0 L8 0 L4 4.5 Z" fill="#000"/></svg>
<div class="b" style="left:780px;top:468px;width:140px;height:19px;background:#fff;border:1px solid #e3e9ef;border-top-color:#abadb3;border-radius:2px;"></div>
<div class="t" style="right:610px;top:498px;font-size:12px;line-height:12px;color:#000;transform:scaleX(0.91);transform-origin:right top;letter-spacing:-0.1px;">Low Low</div>
<div class="b" style="left:357px;top:494px;width:104px;height:19px;background:#fff;border:1px solid #e3e9ef;border-top-color:#abadb3;border-radius:2px;"></div>
<div class="t" style="left:360px;top:498px;font-size:12px;line-height:12px;color:#000;letter-spacing:-0.9px;">0</div>
<div class="b" style="left:471px;top:494px;width:58px;height:21px;border:1px solid #707070;border-radius:3px;background:linear-gradient(180deg,#f2f2f2 0%,#ebebeb 50%,#dddddd 50%,#cfcfcf 100%);box-shadow:inset 0 0 0 1px rgba(255,255,255,0.6);"></div>
<div class="t" style="left:475px;top:499px;font-size:12px;line-height:12px;color:#000;transform:scaleX(0.87);transform-origin:left top;letter-spacing:-0.1px;">None</div>
<svg style="left:517px;top:503px" width="8" height="5" viewBox="0 0 8 5"><path d="M0 0 L8 0 L4 4.5 Z" fill="#000"/></svg>
<div class="b" style="left:539px;top:494px;width:67px;height:21px;border:1px solid #adb2b5;border-radius:3px;background:#f4f4f4;"></div>
<svg style="left:594px;top:503px" width="8" height="5" viewBox="0 0 8 5"><path d="M0 0 L8 0 L4 4.5 Z" fill="#a8a8a8"/></svg>
<div class="b" style="left:616px;top:494px;width:154px;height:21px;background:#fff;border:1px solid #dde3e8;border-top-color:#abadb3;border-radius:2px;"></div>
<div class="t" style="left:619px;top:499px;font-size:12px;line-height:12px;color:#000;transform:scaleX(0.87);transform-origin:left top;letter-spacing:-0.1px;">Low Low</div>
<svg style="left:757px;top:503px" width="8" height="5" viewBox="0 0 8 5"><path d="M0 0 L8 0 L4 4.5 Z" fill="#000"/></svg>
<div class="b" style="left:780px;top:494px;width:140px;height:19px;background:#fff;border:1px solid #e3e9ef;border-top-color:#abadb3;border-radius:2px;"></div>
<div class="t" style="right:610px;top:524px;font-size:12px;line-height:12px;color:#000;transform:scaleX(0.91);transform-origin:right top;letter-spacing:-0.1px;">Zero Scale</div>
<div class="b" style="left:357px;top:520px;width:104px;height:19px;background:#fff;border:1px solid #e3e9ef;border-top-color:#abadb3;border-radius:2px;"></div>
<div class="t" style="left:360px;top:524px;font-size:12px;line-height:12px;color:#000;letter-spacing:-0.9px;">0</div>
<div class="b" style="left:471px;top:520px;width:58px;height:21px;border:1px solid #707070;border-radius:3px;background:linear-gradient(180deg,#f2f2f2 0%,#ebebeb 50%,#dddddd 50%,#cfcfcf 100%);box-shadow:inset 0 0 0 1px rgba(255,255,255,0.6);"></div>
<div class="t" style="left:475px;top:525px;font-size:12px;line-height:12px;color:#000;transform:scaleX(0.87);transform-origin:left top;letter-spacing:-0.1px;">Alarm</div>
<svg style="left:517px;top:529px" width="8" height="5" viewBox="0 0 8 5"><path d="M0 0 L8 0 L4 4.5 Z" fill="#000"/></svg>
<div class="b" style="left:539px;top:520px;width:67px;height:21px;border:1px solid #707070;border-radius:3px;background:linear-gradient(180deg,#f2f2f2 0%,#ebebeb 50%,#dddddd 50%,#cfcfcf 100%);box-shadow:inset 0 0 0 1px rgba(255,255,255,0.6);"></div>
<div class="t" style="left:543px;top:525px;font-size:12px;line-height:12px;color:#000;transform:scaleX(0.87);transform-origin:left top;letter-spacing:-0.1px;">High</div>
<svg style="left:594px;top:529px" width="8" height="5" viewBox="0 0 8 5"><path d="M0 0 L8 0 L4 4.5 Z" fill="#000"/></svg>
<div class="b" style="left:616px;top:520px;width:154px;height:21px;background:#fff;border:1px solid #dde3e8;border-top-color:#abadb3;border-radius:2px;"></div>
<div class="t" style="left:619px;top:525px;font-size:12px;line-height:12px;color:#000;transform:scaleX(0.87);transform-origin:left top;letter-spacing:-0.1px;">Underrange</div>
<svg style="left:757px;top:529px" width="8" height="5" viewBox="0 0 8 5"><path d="M0 0 L8 0 L4 4.5 Z" fill="#000"/></svg>
<div class="b" style="left:780px;top:520px;width:140px;height:19px;background:#fff;border:1px solid #e3e9ef;border-top-color:#abadb3;border-radius:2px;"></div>
<div class="t" style="right:610px;top:576px;font-size:12px;line-height:12px;color:#000;transform:scaleX(0.91);transform-origin:right top;letter-spacing:-0.1px;">Hysteresis</div>
<div class="b" style="left:357px;top:572px;width:104px;height:19px;background:#fff;border:1px solid #e3e9ef;border-top-color:#abadb3;border-radius:2px;border-bottom:none;"></div>
<div class="t" style="left:360px;top:576px;font-size:12px;line-height:12px;color:#000;">0</div>
<div class="b" style="left:539px;top:385px;width:67px;height:53px;background:#fff;border:1px solid #7a7a7a;box-shadow:2px 2px 2px rgba(0,0,0,0.3);"></div>
<div class="b" style="left:540px;top:386px;width:65px;height:13px;background:#3399ff;"></div>
<div class="t" style="left:542px;top:387px;font-size:12px;line-height:12px;color:#fff;transform:scaleX(0.87);transform-origin:left top;letter-spacing:-0.1px;">Low</div>
<div class="t" style="left:542px;top:400px;font-size:12px;line-height:12px;color:#000;transform:scaleX(0.87);transform-origin:left top;letter-spacing:-0.1px;">Medium</div>
<div class="t" style="left:542px;top:413px;font-size:12px;line-height:12px;color:#000;transform:scaleX(0.87);transform-origin:left top;letter-spacing:-0.1px;">High</div>
<div class="t" style="left:542px;top:426px;font-size:12px;line-height:12px;color:#000;transform:scaleX(0.87);transform-origin:left top;letter-spacing:-0.1px;">Critical</div>
<div class="b" style="left:915px;top:306px;width:16px;height:284px;background:#f0f0f0;"></div>
<svg style="left:920px;top:313px" width="7" height="4" viewBox="0 0 7 4"><path d="M0 4 L7 4 L3.5 0 Z" fill="#3a3a3a"/></svg>
<svg style="left:920px;top:580px" width="7" height="4" viewBox="0 0 7 4"><path d="M0 0 L7 0 L3.5 4 Z" fill="#3a3a3a"/></svg>
<div class="b" style="left:916px;top:324px;width:14px;height:57px;border:1px solid #979797;border-radius:2px;background:linear-gradient(90deg,#f0f0f0 0%,#e6e6e6 50%,#d2d2d2 51%,#dcdcdc 100%);"></div>
<div class="b" style="left:920px;top:350px;width:6px;height:5px;background:repeating-linear-gradient(180deg,#444 0,#444 1px,transparent 1px,transparent 2px);"></div>
<div class="b" style="left:198px;top:591px;width:717px;height:16px;background:#f0f0f0;"></div>
<div class="b" style="left:915px;top:590px;width:16px;height:17px;background:#f0f0f0;"></div>
<svg style="left:204px;top:595px" width="4" height="7" viewBox="0 0 4 7"><path d="M4 0 L4 7 L0 3.5 Z" fill="#3a3a3a"/></svg>
<svg style="left:904px;top:595px" width="4" height="7" viewBox="0 0 4 7"><path d="M0 0 L0 7 L4 3.5 Z" fill="#3a3a3a"/></svg>
<div class="b" style="left:216px;top:591px;width:408px;height:15px;border:1px solid #979797;border-radius:2px;background:linear-gradient(180deg,#f0f0f0 0%,#e6e6e6 50%,#d2d2d2 51%,#dcdcdc 100%);"></div>
<div class="b" style="left:417px;top:595px;width:6px;height:6px;background:repeating-linear-gradient(90deg,#444 0,#444 1px,transparent 1px,transparent 2px);"></div>
<svg style="left:0;top:0" width="955" height="633" viewBox="0 0 955 633">
<defs><filter id="sh" x="-20%" y="-20%" width="140%" height="140%"><feGaussianBlur stdDeviation="2.2"/></filter></defs>
<g transform="translate(4,4)" opacity="0.55" filter="url(#sh)">
<path d="M383.5 199.6 C386.1 237.0 398.6 267.6 450.9 276.0 C512.6 285.9 557.6 286.1 566.5 340.0" fill="none" stroke="#333" stroke-width="4"/>
<path d="M558.9 340.5 L574.3 340.5 L567.8 356 Z" fill="#333"/>
</g>
<circle cx="383.5" cy="199.5" r="3.8" fill="#ff0000"/>
<path d="M383.5 199.6 C386.1 237.0 398.6 267.6 450.9 276.0 C512.6 285.9 557.6 286.1 566.5 340.0" fill="none" stroke="#ff0000" stroke-width="4"/>
<path d="M558.9 340.5 L574.3 340.5 L567.8 356 Z" fill="#ff0000"/>
</svg>
</body></html>
